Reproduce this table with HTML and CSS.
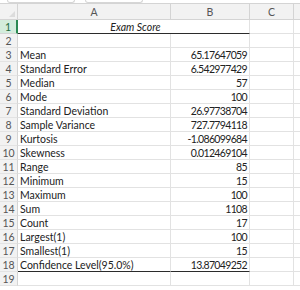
FILE: index.html
```html
<!DOCTYPE html>
<html lang="en">
<head>
  <meta charset="UTF-8" />
  <title>Descriptive statistics</title>
  <link rel="stylesheet" href="styles.css">
</head>
<body>
  <!-- bit of the formula bar peeking in at the top -->
  <div class="toolbar">
    <div class="tool-box name-box"></div>
    <div class="tool-box formula-box"></div>
  </div>

  <div class="sheet">
    <div class="corner"><span class="select-all"></span></div>
    <div class="col-head">A</div>
    <div class="col-head">B</div>
    <div class="col-head">C</div>
    <div class="col-head last"></div>

    <div class="row-head active">1</div>
    <div class="cell merged title">Exam Score</div>
    <div class="cell"></div>
    <div class="cell last"></div>

    <div class="row-head">2</div>
    <div class="cell"></div><div class="cell"></div><div class="cell"></div><div class="cell last"></div>

    <div class="row-head">3</div>
    <div class="cell label">Mean</div><div class="cell num">65.17647059</div><div class="cell"></div><div class="cell last"></div>
    <div class="row-head">4</div>
    <div class="cell label">Standard Error</div><div class="cell num">6.542977429</div><div class="cell"></div><div class="cell last"></div>
    <div class="row-head">5</div>
    <div class="cell label">Median</div><div class="cell num">57</div><div class="cell"></div><div class="cell last"></div>
    <div class="row-head">6</div>
    <div class="cell label">Mode</div><div class="cell num">100</div><div class="cell"></div><div class="cell last"></div>
    <div class="row-head">7</div>
    <div class="cell label">Standard Deviation</div><div class="cell num">26.97738704</div><div class="cell"></div><div class="cell last"></div>
    <div class="row-head">8</div>
    <div class="cell label">Sample Variance</div><div class="cell num">727.7794118</div><div class="cell"></div><div class="cell last"></div>
    <div class="row-head">9</div>
    <div class="cell label">Kurtosis</div><div class="cell num">-1.086099684</div><div class="cell"></div><div class="cell last"></div>
    <div class="row-head">10</div>
    <div class="cell label">Skewness</div><div class="cell num">0.012469104</div><div class="cell"></div><div class="cell last"></div>
    <div class="row-head">11</div>
    <div class="cell label">Range</div><div class="cell num">85</div><div class="cell"></div><div class="cell last"></div>
    <div class="row-head">12</div>
    <div class="cell label">Minimum</div><div class="cell num">15</div><div class="cell"></div><div class="cell last"></div>
    <div class="row-head">13</div>
    <div class="cell label">Maximum</div><div class="cell num">100</div><div class="cell"></div><div class="cell last"></div>
    <div class="row-head">14</div>
    <div class="cell label">Sum</div><div class="cell num">1108</div><div class="cell"></div><div class="cell last"></div>
    <div class="row-head">15</div>
    <div class="cell label">Count</div><div class="cell num">17</div><div class="cell"></div><div class="cell last"></div>
    <div class="row-head">16</div>
    <div class="cell label">Largest(1)</div><div class="cell num">100</div><div class="cell"></div><div class="cell last"></div>
    <div class="row-head">17</div>
    <div class="cell label">Smallest(1)</div><div class="cell num">15</div><div class="cell"></div><div class="cell last"></div>
    <div class="row-head">18</div>
    <div class="cell label total">Confidence Level(95.0%)</div><div class="cell num total">13.87049252</div><div class="cell"></div><div class="cell last"></div>

    <div class="row-head">19</div>
    <div class="cell"></div><div class="cell"></div><div class="cell"></div><div class="cell last"></div>
  </div>
</body>
</html>
```

FILE: styles.css
```css
html, body {
  margin: 0;
  width: 300px;
  height: 290px;
  overflow: hidden;
  background: #fff;
  font-family: Lato, "Open Sans", sans-serif;
  font-size: 10.5px;
  color: #222;
}
* { box-sizing: border-box; }

.toolbar {
  height: 4px;
  display: flex;
  gap: 10px;
  padding-left: 7px;
  border-bottom: 1px solid #d4d4d4;
  overflow: hidden;
}
.tool-box {
  height: 3px;
  border: 1px solid #d6d6d6;
  border-top: none;
  border-radius: 0 0 3px 3px;
}
.name-box { width: 68px; }
.formula-box { width: 58px; }

.sheet {
  display: grid;
  grid-template-columns: 18px 153px 79px 44px 1fr;
  grid-template-rows: 16px repeat(19, 14px);
}

/* headers */
.corner,
.col-head,
.row-head {
  background: #f2f2f2;
  color: #555;
  border-right: 1px solid #d4d4d4;
  border-bottom: 1px solid #d4d4d4;
}
.corner {
  position: relative;
}
.select-all {
  position: absolute;
  right: 2px;
  bottom: 2px;
  width: 0;
  height: 0;
  border-left: 6px solid transparent;
  border-bottom: 6px solid #dcdcdc;
}
.col-head {
  display: flex;
  align-items: center;
  justify-content: center;
  padding-top: 1px;
}
.row-head {
  display: flex;
  align-items: center;
  justify-content: center;
  border-bottom-color: #e3e3e3;
  line-height: 13px;
  padding-top: 1px;
}
.row-head.active {
  background: #d3ecdc;
  color: #1d6b3e;
  border-right: 2px solid #2b8a52;
  border-bottom-color: #d4d4d4;
}
.last {
  border-right: none;
}

/* cells */
.cell {
  border-right: 1px solid #e2e2e2;
  border-bottom: 1px solid #e2e2e2;
  line-height: 14px;
  padding: 0 2px;
  white-space: nowrap;
  overflow: hidden;
}
.cell.last { border-right: none; }
.merged {
  grid-column: span 2;
  text-align: center;
  border-bottom: 1px solid #2b2b2b;
}
.title {
  font-style: italic;
  padding-left: 6px;
}
.num {
  text-align: right;
  letter-spacing: -0.65px;
}
.total {
  border-bottom: 1px solid #2b2b2b;
}
```
